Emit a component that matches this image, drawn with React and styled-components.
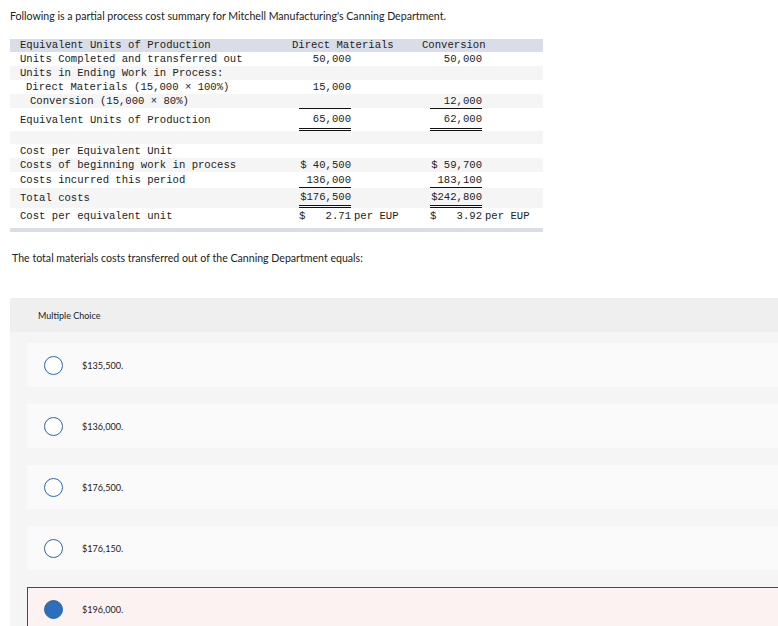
import React from "react";
import styled, { createGlobalStyle } from "styled-components";

const Global = createGlobalStyle`
  html, body { margin: 0; padding: 0; background: #fff; overflow: hidden; }
  body { font-family: Lato, "Open Sans", Arial, sans-serif; color: #222; }
`;

const Page = styled.div`
  width: 860px;
  padding: 0 0 0 10px;
`;

const Intro = styled.p`
  margin: 0;
  padding-top: 9px;
  font-size: 10.6px;
  line-height: 14px;
  color: #222;
`;

const Table = styled.div`
  margin-top: 16px;
  width: 533px;
  font-family: "Liberation Mono", "Courier New", monospace;
  font-size: 10.6px;
  color: #222;
  border-bottom: 4px solid #d9dde8;
`;

const HeadRow = styled.div`
  display: grid;
  grid-template-columns: 272px 130px 1fr;
  padding-left: 10px;
  height: 13px;
  line-height: 13px;
  background: #d9dde8;
  white-space: pre;
`;

const Row = styled.div`
  display: grid;
  grid-template-columns: 279px 52px 79px 52px 1fr;
  padding-left: 10px;
  height: ${(p) => p.$h || 14}px;
  box-sizing: border-box;
  padding-bottom: ${(p) => p.$pb || 0}px;
  background: ${(p) => (p.$alt ? "#f5f5f5" : "#fff")};
  white-space: pre;
`;

const Label = styled.div`
  display: flex;
  align-items: center;
  padding-left: ${(p) => p.$indent || 0}px;
`;

const Val = styled.div`
  display: flex;
  align-items: center;
  justify-content: ${(p) => (p.$split ? "space-between" : "flex-end")};
  border-top: ${(p) => (p.$top ? "1px solid #111" : "none")};
  border-bottom: ${(p) =>
    p.$double ? "3px double #111" : p.$under ? "1px solid #111" : "none"};
`;

const Suffix = styled.div`
  display: flex;
  align-items: center;
  padding-left: 3px;
`;

const Question = styled.p`
  margin: 19px 0 0 2px;
  font-size: 10.6px;
  line-height: 14px;
  color: #222;
`;

const Panel = styled.section`
  margin-top: 33px;
  background: #f5f5f5;
  padding-bottom: 40px;
`;

const PanelHead = styled.div`
  background: #efefef;
  height: 34px;
  display: flex;
  align-items: center;
  padding-left: 28px;
  font-size: 9px;
  color: #222;
`;

const Options = styled.div`
  display: flex;
  flex-direction: column;
  gap: 17px;
  padding: 11px 0 0 17px;
`;

const Option = styled.div`
  height: 44px;
  box-sizing: border-box;
  display: flex;
  align-items: center;
  padding-left: ${(p) => (p.$sel ? 16 : 17)}px;
  gap: 19px;
  background: ${(p) => (p.$sel ? "#fdf2f2" : "#fafafa")};
  border: ${(p) => (p.$sel ? "1px solid #c8101e" : "none")};
  font-size: 9.1px;
  color: #222;
`;

const Radio = styled.span`
  width: 19px;
  height: 19px;
  box-sizing: border-box;
  border-radius: 50%;
  border: 1.5px solid #2a67a6;
  background: ${(p) => (p.$on ? "#2d6fbd" : "#fff")};
  flex: none;
`;

const rows1 = [
  { label: "Units Completed and transferred out", dm: "50,000", cv: "50,000" },
  { label: "Units in Ending Work in Process:", alt: true },
  { label: "Direct Materials (15,000 × 100%)", indent: 6, dm: "15,000" },
  { label: "Conversion (15,000 × 80%)", indent: 10, cv: "12,000", alt: true },
];

const options = ["$135,500.", "$136,000.", "$176,500.", "$176,150.", "$196,000."];

export default function App() {
  return (
    <Page>
      <Global />
      <Intro>
        Following is a partial process cost summary for Mitchell Manufacturing's Canning Department.
      </Intro>
      <Table>
        <HeadRow>
          <div>Equivalent Units of Production</div>
          <div>Direct Materials</div>
          <div>Conversion</div>
        </HeadRow>
        {rows1.map((r) => (
          <Row key={r.label} $alt={r.alt}>
            <Label $indent={r.indent}>{r.label}</Label>
            <Val>{r.dm || ""}</Val>
            <div />
            <Val>{r.cv || ""}</Val>
            <div />
          </Row>
        ))}
        <Row $h={23}>
          <Label>Equivalent Units of Production</Label>
          <Val $top $double>65,000</Val>
          <div />
          <Val $top $double>62,000</Val>
          <div />
        </Row>
        <Row $h={13} $alt />
        <Row>
          <Label>Cost per Equivalent Unit</Label>
        </Row>
        <Row $alt>
          <Label>Costs of beginning work in process</Label>
          <Val>$ 40,500</Val>
          <div />
          <Val>$ 59,700</Val>
          <div />
        </Row>
        <Row $h={16}>
          <Label>Costs incurred this period</Label>
          <Val $under>136,000</Val>
          <div />
          <Val $under>183,100</Val>
          <div />
        </Row>
        <Row $h={20} $alt>
          <Label>Total costs</Label>
          <Val $double>$176,500</Val>
          <div />
          <Val $double>$242,800</Val>
          <div />
        </Row>
        <Row $h={20} $pb={5}>
          <Label>Cost per equivalent unit</Label>
          <Val $split>
            <span>$</span>
            <span>2.71</span>
          </Val>
          <Suffix>per EUP</Suffix>
          <Val $split>
            <span>$</span>
            <span>3.92</span>
          </Val>
          <Suffix>per EUP</Suffix>
        </Row>
      </Table>
      <Question>The total materials costs transferred out of the Canning Department equals:</Question>
      <Panel>
        <PanelHead>Multiple Choice</PanelHead>
        <Options>
          {options.map((o, i) => (
            <Option key={o} $sel={i === 4}>
              <Radio $on={i === 4} />
              <span>{o}</span>
            </Option>
          ))}
        </Options>
      </Panel>
    </Page>
  );
}
